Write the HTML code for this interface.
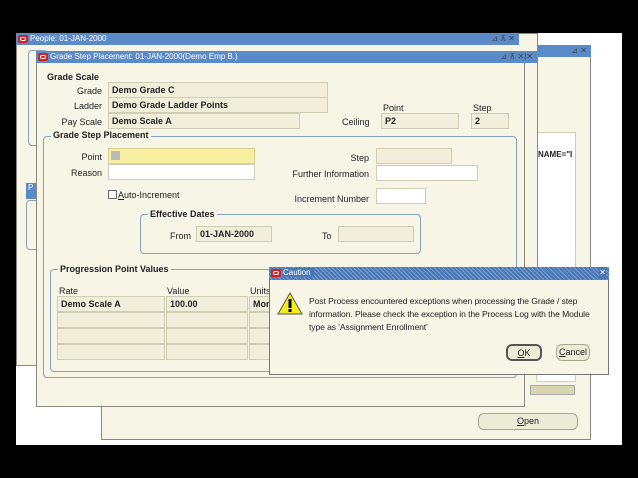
<html><head><style>
body{margin:0;width:638px;height:478px;background:#000;position:relative;overflow:hidden;font-family:"Liberation Sans",sans-serif;font-size:9px;color:#222}
div{position:absolute;box-sizing:border-box}
.w{background:#f6f5e6;border:1px solid #8a8a80}
.tb{background:#5b8ac8;color:#fff;height:12px;font-size:8px;line-height:12px;padding-left:14px}
.tb i{position:absolute;left:2px;top:2px;width:10px;height:8px;background:#d42020;border-radius:2px}
.tb i:after{content:"";position:absolute;left:2px;top:2px;width:4px;height:2px;border:1px solid #fff;border-radius:2px}
.f{background:#f1efdc;border:1px solid #cfcdb4;font-weight:bold;font-size:9px;padding-left:3px;line-height:14px}
.wh{background:#fff;border:1px solid #cfcdb4}
.l{text-align:right;width:80px;white-space:nowrap}
.fr{border:1px solid #8aa2b8;border-radius:4px}
.ft{background:#f6f5e6;font-weight:bold;padding:0 2px;font-size:9px}
.b{font-weight:bold}
.btn{background:#ecebd6;border:1px solid #a8a690;border-radius:6px;text-align:center;line-height:15px}
</style></head><body>
<div style="left:16px;top:33px;width:606px;height:412px;background:#fff"></div>
<!-- back right window -->
<div class="w" style="left:101px;top:45px;width:490px;height:395px"></div>
<div class="tb" style="left:101px;top:45px;width:490px;height:12px;text-align:right;padding-right:4px;color:#444">⊿ ✕</div>
<div class="wh" style="left:536px;top:132px;width:40px;height:250px"></div>
<div class="b" style="left:538px;top:150px;font-size:8px">NAME="I</div>
<div style="left:530px;top:385px;width:45px;height:10px;background:#d8d6b0;border:1px solid #aaa"></div>
<div class="btn" style="left:478px;top:413px;width:100px;height:17px"><u>O</u>pen</div>
<!-- people window -->
<div class="w" style="left:16px;top:33px;width:522px;height:333px"></div>
<div class="tb" style="left:16px;top:33px;width:503px">People: 01-JAN-2000<i></i><span style="position:absolute;right:4px;color:#444">⊿ ⊼ ✕</span></div>
<div class="fr" style="left:28px;top:50px;width:20px;height:96px"></div>
<div style="left:26px;top:183px;width:10px;height:16px;background:#5b8ac8;color:#fff;font-size:8px;padding-left:2px">P</div>
<div class="fr" style="left:26px;top:200px;width:14px;height:50px"></div>
<!-- grade step window -->
<div class="w" style="left:36px;top:51px;width:489px;height:356px"></div>
<div class="tb" style="left:36px;top:51px;width:501px">Grade Step Placement: 01-JAN-2000(Demo Emp B.)<i></i><span style="position:absolute;right:4px;color:#444">⊿ ⊼ ✕|✕</span></div>
<div class="b" style="left:47px;top:72px">Grade Scale</div>
<div class="l" style="left:22px;top:86px">Grade</div><div class="f" style="left:108px;top:82px;width:220px;height:16px">Demo Grade C</div>
<div class="l" style="left:22px;top:101px">Ladder</div><div class="f" style="left:108px;top:97px;width:220px;height:16px">Demo Grade Ladder Points</div>
<div class="l" style="left:22px;top:117px">Pay Scale</div><div class="f" style="left:108px;top:113px;width:192px;height:16px">Demo Scale A</div>
<div style="left:383px;top:103px">Point</div><div style="left:473px;top:103px">Step</div>
<div style="left:342px;top:117px">Ceiling</div>
<div class="f" style="left:381px;top:113px;width:78px;height:16px">P2</div>
<div class="f" style="left:471px;top:113px;width:38px;height:16px">2</div>
<div class="fr" style="left:43px;top:136px;width:474px;height:242px"></div>
<div class="ft" style="left:51px;top:130px">Grade Step Placement</div>
<div class="l" style="left:22px;top:152px">Point</div>
<div style="left:108px;top:148px;width:147px;height:16px;background:#f8f0a0;border:1px solid #d8d090"><span style="position:absolute;left:2px;top:2px;width:9px;height:9px;background:#bbb"></span></div>
<div class="l" style="left:22px;top:168px">Reason</div><div class="wh" style="left:108px;top:164px;width:147px;height:16px"></div>
<div class="l" style="left:289px;top:153px">Step</div><div class="f" style="left:376px;top:148px;width:76px;height:16px"></div>
<div class="l" style="left:289px;top:169px">Further Information</div><div class="wh" style="left:376px;top:165px;width:102px;height:16px"></div>
<div style="left:108px;top:190px;width:9px;height:9px;border:1px solid #666;background:#fff"></div>
<div style="left:118px;top:190px"><u>A</u>uto-Increment</div>
<div class="l" style="left:289px;top:194px">Increment Number</div><div class="wh" style="left:376px;top:188px;width:50px;height:16px"></div>
<div class="fr" style="left:140px;top:214px;width:281px;height:40px"></div>
<div class="ft" style="left:148px;top:209px">Effective Dates</div>
<div style="left:170px;top:231px">From</div><div class="f" style="left:196px;top:226px;width:76px;height:16px">01-JAN-2000</div>
<div style="left:322px;top:231px">To</div><div class="f" style="left:338px;top:226px;width:76px;height:16px"></div>
<div class="fr" style="left:50px;top:269px;width:300px;height:103px"></div>
<div class="ft" style="left:58px;top:264px">Progression Point Values</div>
<div style="left:59px;top:286px">Rate</div><div style="left:167px;top:286px">Value</div><div style="left:250px;top:286px">Units</div>
<div class="f" style="left:57px;top:296px;width:108px;height:16px">Demo Scale A</div>
<div class="f" style="left:166px;top:296px;width:82px;height:16px">100.00</div>
<div class="f" style="left:249px;top:296px;width:30px;height:16px">Mon</div>
<div class="f" style="left:57px;top:312px;width:108px;height:16px"></div><div class="f" style="left:166px;top:312px;width:82px;height:16px"></div><div class="f" style="left:249px;top:312px;width:30px;height:16px"></div>
<div class="f" style="left:57px;top:328px;width:108px;height:16px"></div><div class="f" style="left:166px;top:328px;width:82px;height:16px"></div><div class="f" style="left:249px;top:328px;width:30px;height:16px"></div>
<div class="f" style="left:57px;top:344px;width:108px;height:16px"></div><div class="f" style="left:166px;top:344px;width:82px;height:16px"></div><div class="f" style="left:249px;top:344px;width:30px;height:16px"></div>
<!-- caution -->
<div class="w" style="left:269px;top:267px;width:340px;height:108px;border-color:#777"></div>
<div class="tb" style="left:269px;top:267px;width:340px;height:13px;background:#4a78b6 repeating-linear-gradient(45deg,#4a78b6 0 2px,#7aa0d0 2px 3px)"><span style="background:#4a78b6;padding-right:3px">Caution</span><i></i><span style="position:absolute;right:3px;background:#4a78b6">✕</span></div>
<svg style="position:absolute;left:277px;top:292px" width="26" height="23"><polygon points="13,1 25,22 1,22" fill="#f4ec20" stroke="#555" stroke-width="1"/><rect x="11.5" y="7" width="3" height="9" fill="#000"/><rect x="11.5" y="17" width="3" height="3" fill="#000"/></svg>
<div style="left:309px;top:295px;line-height:13px;font-size:8.6px;width:300px;white-space:nowrap;letter-spacing:-0.1px">Post Process encountered exceptions when processing the Grade / step<br>information. Please check the exception in the Process Log with the Module<br>type as 'Assignment Enrollment'</div>
<div class="btn" style="left:506px;top:344px;width:36px;height:17px;border:2px solid #555"><u>O</u>K</div>
<div class="btn" style="left:556px;top:344px;width:34px;height:17px"><u>C</u>ancel</div>
</body></html>
